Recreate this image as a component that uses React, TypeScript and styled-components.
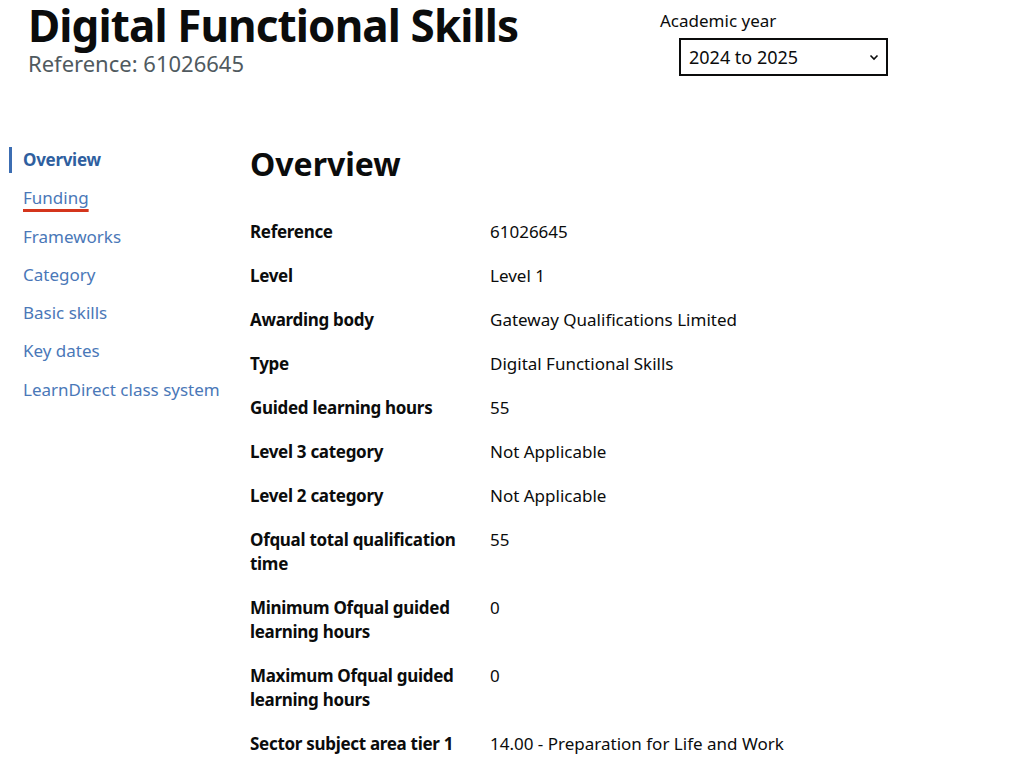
import React from "react"
import styled, { createGlobalStyle } from "styled-components"

const Global = createGlobalStyle`
  body {
    margin: 0;
    background: #ffffff;
    color: #0b0c0c;
    font-family: "Noto Sans", "Liberation Sans", Arial, sans-serif;
  }
`

const rows: { label: string; value: string }[] = [
  { label: "Reference", value: "61026645" },
  { label: "Level", value: "Level 1" },
  { label: "Awarding body", value: "Gateway Qualifications Limited" },
  { label: "Type", value: "Digital Functional Skills" },
  { label: "Guided learning hours", value: "55" },
  { label: "Level 3 category", value: "Not Applicable" },
  { label: "Level 2 category", value: "Not Applicable" },
  { label: "Ofqual total qualification time", value: "55" },
  { label: "Minimum Ofqual guided learning hours", value: "0" },
  { label: "Maximum Ofqual guided learning hours", value: "0" },
  { label: "Sector subject area tier 1", value: "14.00 - Preparation for Life and Work" },
]

const navItems = [
  "Overview",
  "Funding",
  "Frameworks",
  "Category",
  "Basic skills",
  "Key dates",
  "LearnDirect class system",
]

const App = () => {
  return (
    <Page>
      <Global />
      <Header>
        <TitleBlock>
          <Title>Digital Functional Skills</Title>
          <Caption>Reference: 61026645</Caption>
        </TitleBlock>
        <YearPicker>
          <YearLabel>Academic year</YearLabel>
          <SelectBox>
            <span>2024 to 2025</span>
            <svg width="12" height="12" viewBox="0 0 12 12">
              <path d="M2.5 4.5 L6 8 L9.5 4.5" fill="none" stroke="#0b0c0c" strokeWidth="1.6" />
            </svg>
          </SelectBox>
        </YearPicker>
      </Header>
      <Main>
        <SideNav>
          {navItems.map((item, i) => (
            <NavItem key={item} active={i === 0}>
              <NavLink active={i === 0} marked={item === "Funding"}>
                {item}
              </NavLink>
            </NavItem>
          ))}
        </SideNav>
        <Content>
          <Heading>Overview</Heading>
          <List>
            {rows.map((r) => (
              <Row key={r.label}>
                <Key>{r.label}</Key>
                <Value>{r.value}</Value>
              </Row>
            ))}
          </List>
        </Content>
      </Main>
    </Page>
  )
}
export default App

const Page = styled.div`
  width: 1024px;
  padding: 0 0 0 9px;
  box-sizing: border-box;
`
const Header = styled.div`
  display: flex;
  align-items: flex-start;
  height: 118px;
`
const TitleBlock = styled.div`
  width: 651px;
  padding-left: 19px;
  box-sizing: border-box;
`
const Title = styled.h1`
  margin: 0;
  font-size: 44px;
  line-height: 50px;
  font-weight: 700;
  letter-spacing: -0.9px;
`
const Caption = styled.div`
  margin-top: 1px;
  font-size: 22px;
  line-height: 24px;
  color: #505a5f;
`
const YearPicker = styled.div`
  padding-top: 9px;
`
const YearLabel = styled.div`
  font-size: 17px;
  line-height: 24px;
  color: #0b0c0c;
`
const SelectBox = styled.div`
  margin: 5px 0 0 19px;
  width: 209px;
  height: 38px;
  box-sizing: border-box;
  border: 2px solid #0b0c0c;
  display: flex;
  align-items: center;
  justify-content: space-between;
  padding: 0 6px 0 8px;
  font-size: 18px;
`
const Main = styled.div`
  display: grid;
  grid-template-columns: 241px 1fr;
  padding-top: 29px;
`
const SideNav = styled.ul`
  list-style: none;
  margin: 0;
  padding: 0;
  display: flex;
  flex-direction: column;
  gap: 12.3px;
`
const NavItem = styled.li<{ active: boolean }>`
  border-left: 3px solid ${({ active }) => (active ? "#3c6db2" : "transparent")};
  padding-left: 11px;
  line-height: 26px;
`
const NavLink = styled.span<{ active: boolean; marked: boolean }>`
  font-size: 17px;
  color: ${({ active }) => (active ? "#2f5f9f" : "#4a78b8")};
  font-weight: ${({ active }) => (active ? 700 : 400)};
  letter-spacing: ${({ active }) => (active ? "-0.3px" : "0")};
  ${({ marked }) => marked && "text-decoration: underline; text-decoration-color: #d4351c; text-decoration-thickness: 3px; text-underline-offset: 5px;"}
`
const Content = styled.div`
  margin-top: -3px;
`
const Heading = styled.h2`
  margin: 0 0 36px;
  font-size: 32px;
  line-height: 40px;
  font-weight: 700;
`
const List = styled.dl`
  margin: 0;
`
const Row = styled.div`
  display: grid;
  grid-template-columns: 240px 1fr;
  padding-bottom: 20px;
`
const Key = styled.dt`
  font-weight: 700;
  font-size: 17px;
  line-height: 24px;
  padding-right: 20px;
  letter-spacing: -0.3px;
`
const Value = styled.dd`
  margin: 0;
  font-size: 17px;
  line-height: 24px;
`
